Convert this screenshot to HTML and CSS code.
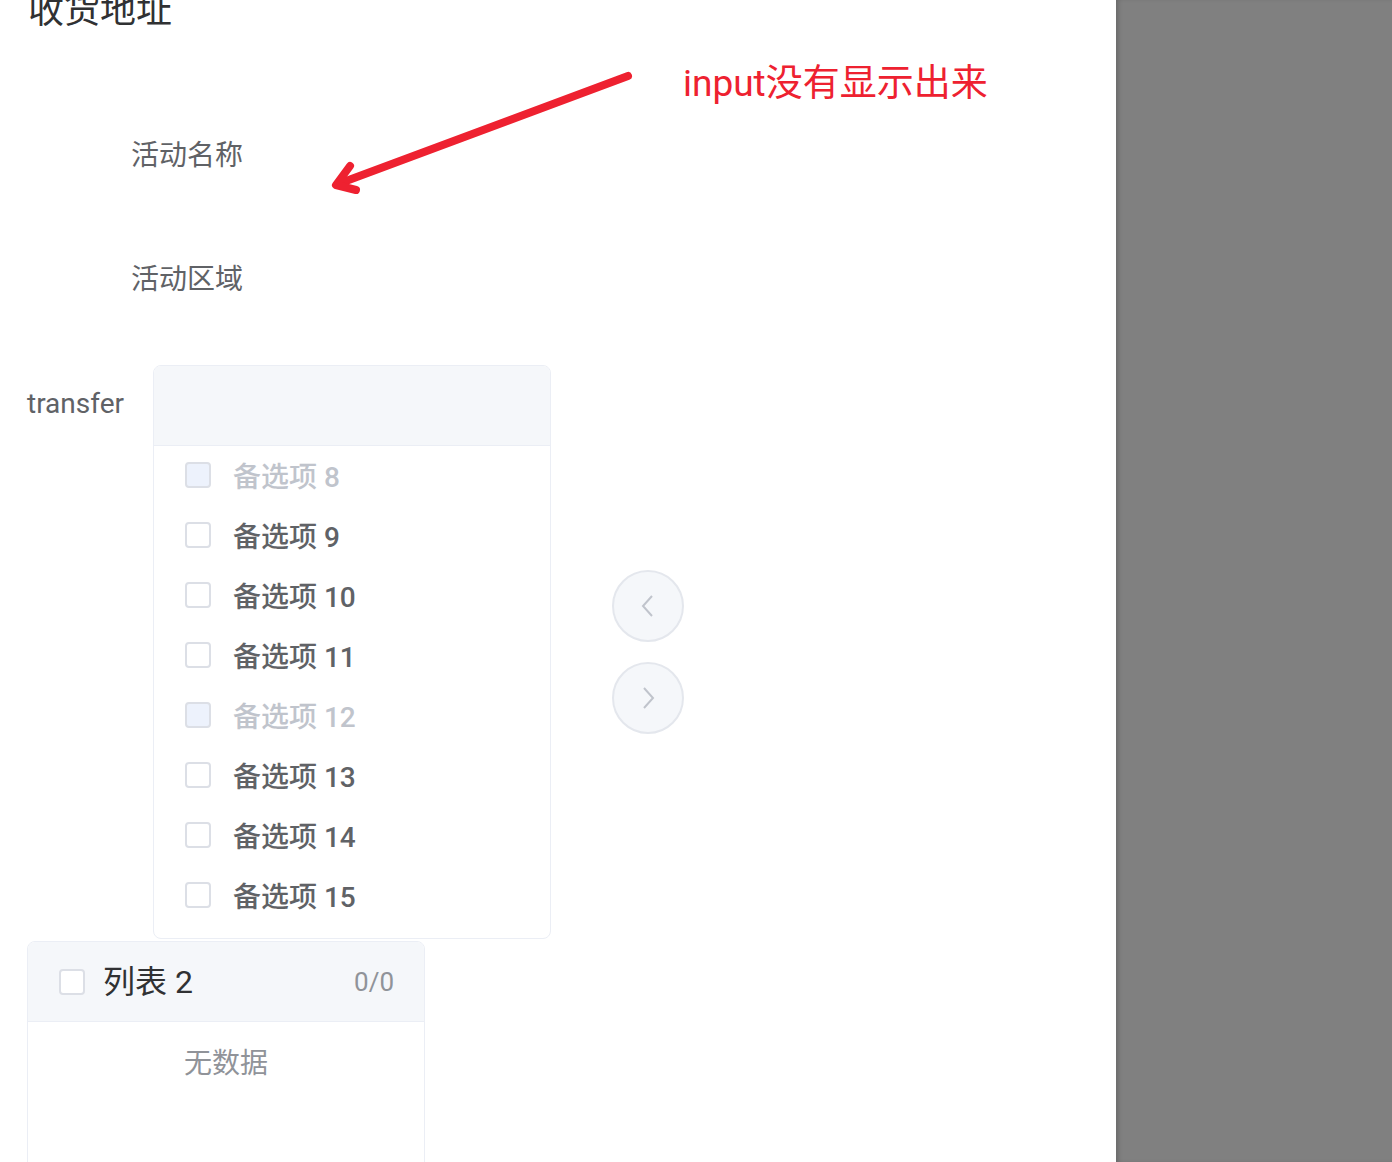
FILE: index.html
```html
<!DOCTYPE html>
<html lang="zh-CN">
<head>
    <meta charset="UTF-8">
    <meta name="viewport" content="width=device-width, initial-scale=1.0">
    <title>收货地址</title>
    <link rel="stylesheet" href="styles.css">
</head>
<body>
    <div class="page">
        <div class="main">
            <div class="title">收货地址</div>

            <div class="form">
                <div class="form-item">
                    <label class="label">活动名称</label>
                </div>
                <div class="form-item">
                    <label class="label">活动区域</label>
                </div>
                <div class="form-item last">
                    <label class="label label-small">transfer</label>
                    <div class="transfer">
                        <div class="panel">
                            <div class="panel-head"></div>
                            <div class="list">
                                <div class="item disabled"><span class="cb"></span>备选项 8</div>
                                <div class="item"><span class="cb"></span>备选项 9</div>
                                <div class="item"><span class="cb"></span>备选项 10</div>
                                <div class="item"><span class="cb"></span>备选项 11</div>
                                <div class="item disabled"><span class="cb"></span>备选项 12</div>
                                <div class="item"><span class="cb"></span>备选项 13</div>
                                <div class="item"><span class="cb"></span>备选项 14</div>
                                <div class="item"><span class="cb"></span>备选项 15</div>
                            </div>
                        </div>
                        <div class="buttons">
                            <div class="btn">
                                <svg width="20" height="28" viewBox="0 0 20 28"><path d="M14 4 L5 14 L14 24" fill="none" stroke="#c0c4cc" stroke-width="2"/></svg>
                            </div>
                            <div class="btn">
                                <svg width="20" height="28" viewBox="0 0 20 28"><path d="M6 4 L15 14 L6 24" fill="none" stroke="#c0c4cc" stroke-width="2"/></svg>
                            </div>
                        </div>
                    </div>
                </div>
            </div>

            <div class="panel panel2">
                <div class="panel-head">
                    <span class="cb"></span>
                    <span class="head-title">列表 2</span>
                    <span class="count">0/0</span>
                </div>
                <div class="empty">无数据</div>
            </div>

            <!-- annotation -->
            <div class="note">input没有显示出来</div>
            <svg class="arrow" width="340" height="140" viewBox="0 0 340 140">
                <g fill="none" stroke="#ee2130" stroke-width="8" stroke-linecap="round" stroke-linejoin="round">
                    <path d="M328 10 L38 118"/>
                    <path d="M50 100 L36 119 L56 124"/>
                </g>
            </svg>
        </div>
        <div class="side"></div>
    </div>
</body>
</html>
```

FILE: styles.css
```css
* {
    box-sizing: border-box;
}
html, body {
    margin: 0;
    height: 100%;
    overflow: hidden;
}
body {
    font-family: Roboto, "Noto Sans CJK SC", sans-serif;
    background: #fff;
}
.page {
    display: flex;
    height: 100vh;
}
.main {
    position: relative;
    width: 1116px;
    padding-left: 27px;
}
.side {
    flex: 1;
    background: #808080;
    box-shadow: inset 4px 0 5px -2px rgba(0, 0, 0, 0.2);
}

.title {
    font-size: 36px;
    line-height: 36px;
    color: #303133;
    margin: -7px 0 0 1px;
}

.form {
    margin-top: 87px;
}
.form-item {
    display: flex;
    margin-bottom: 44px;
}
.form-item.last {
    margin-bottom: 0;
}
.label {
    width: 240px;
    padding-right: 24px;
    text-align: right;
    line-height: 80px;
    font-size: 28px;
    color: #606266;
}
.label-small {
    width: 126px;
    text-align: left;
}

.transfer {
    display: flex;
    align-items: center;
    margin-top: 1px;
}
.panel {
    width: 398px;
    border: 1px solid #ebeef5;
    border-radius: 8px;
    background: #fff;
    overflow: hidden;
}
.panel-head {
    height: 80px;
    background: #f5f7fa;
    border-bottom: 1px solid #ebeef5;
    display: flex;
    align-items: center;
    padding: 0 30px 0 31px;
}
.list {
    padding-bottom: 12px;
}
.item {
    height: 60px;
    display: flex;
    align-items: center;
    padding-left: 31px;
    padding-bottom: 2px;
    font-size: 28px;
    font-weight: 500;
    color: #606266;
}
.cb {
    width: 26px;
    height: 26px;
    border: 2px solid #dcdfe6;
    border-radius: 4px;
    background: #fff;
    margin-right: 22px;
    flex-shrink: 0;
}
.item.disabled {
    color: #c0c4cc;
}
.item.disabled .cb {
    background: #edf2fc;
}

.buttons {
    display: flex;
    flex-direction: column;
    gap: 20px;
    margin-left: 61px;
}
.btn {
    width: 72px;
    height: 72px;
    border: 2px solid #e4e7ed;
    border-radius: 50%;
    background: #f5f7fa;
    display: flex;
    align-items: center;
    justify-content: center;
}

.panel2 {
    margin-top: 2px;
    height: 260px;
}
.panel2 .cb {
    margin-right: 18px;
}
.head-title {
    font-size: 32px;
    color: #303133;
    margin-top: -6px;
}
.count {
    margin-left: auto;
    font-size: 26px;
    color: #909399;
}
.empty {
    padding-top: 12px;
    line-height: 60px;
    text-align: center;
    font-size: 28px;
    color: #909399;
}

.note {
    position: absolute;
    left: 683px;
    top: 63px;
    font-size: 37px;
    line-height: 42px;
    color: #ee2130;
}
.arrow {
    position: absolute;
    left: 300px;
    top: 66px;
}
```
